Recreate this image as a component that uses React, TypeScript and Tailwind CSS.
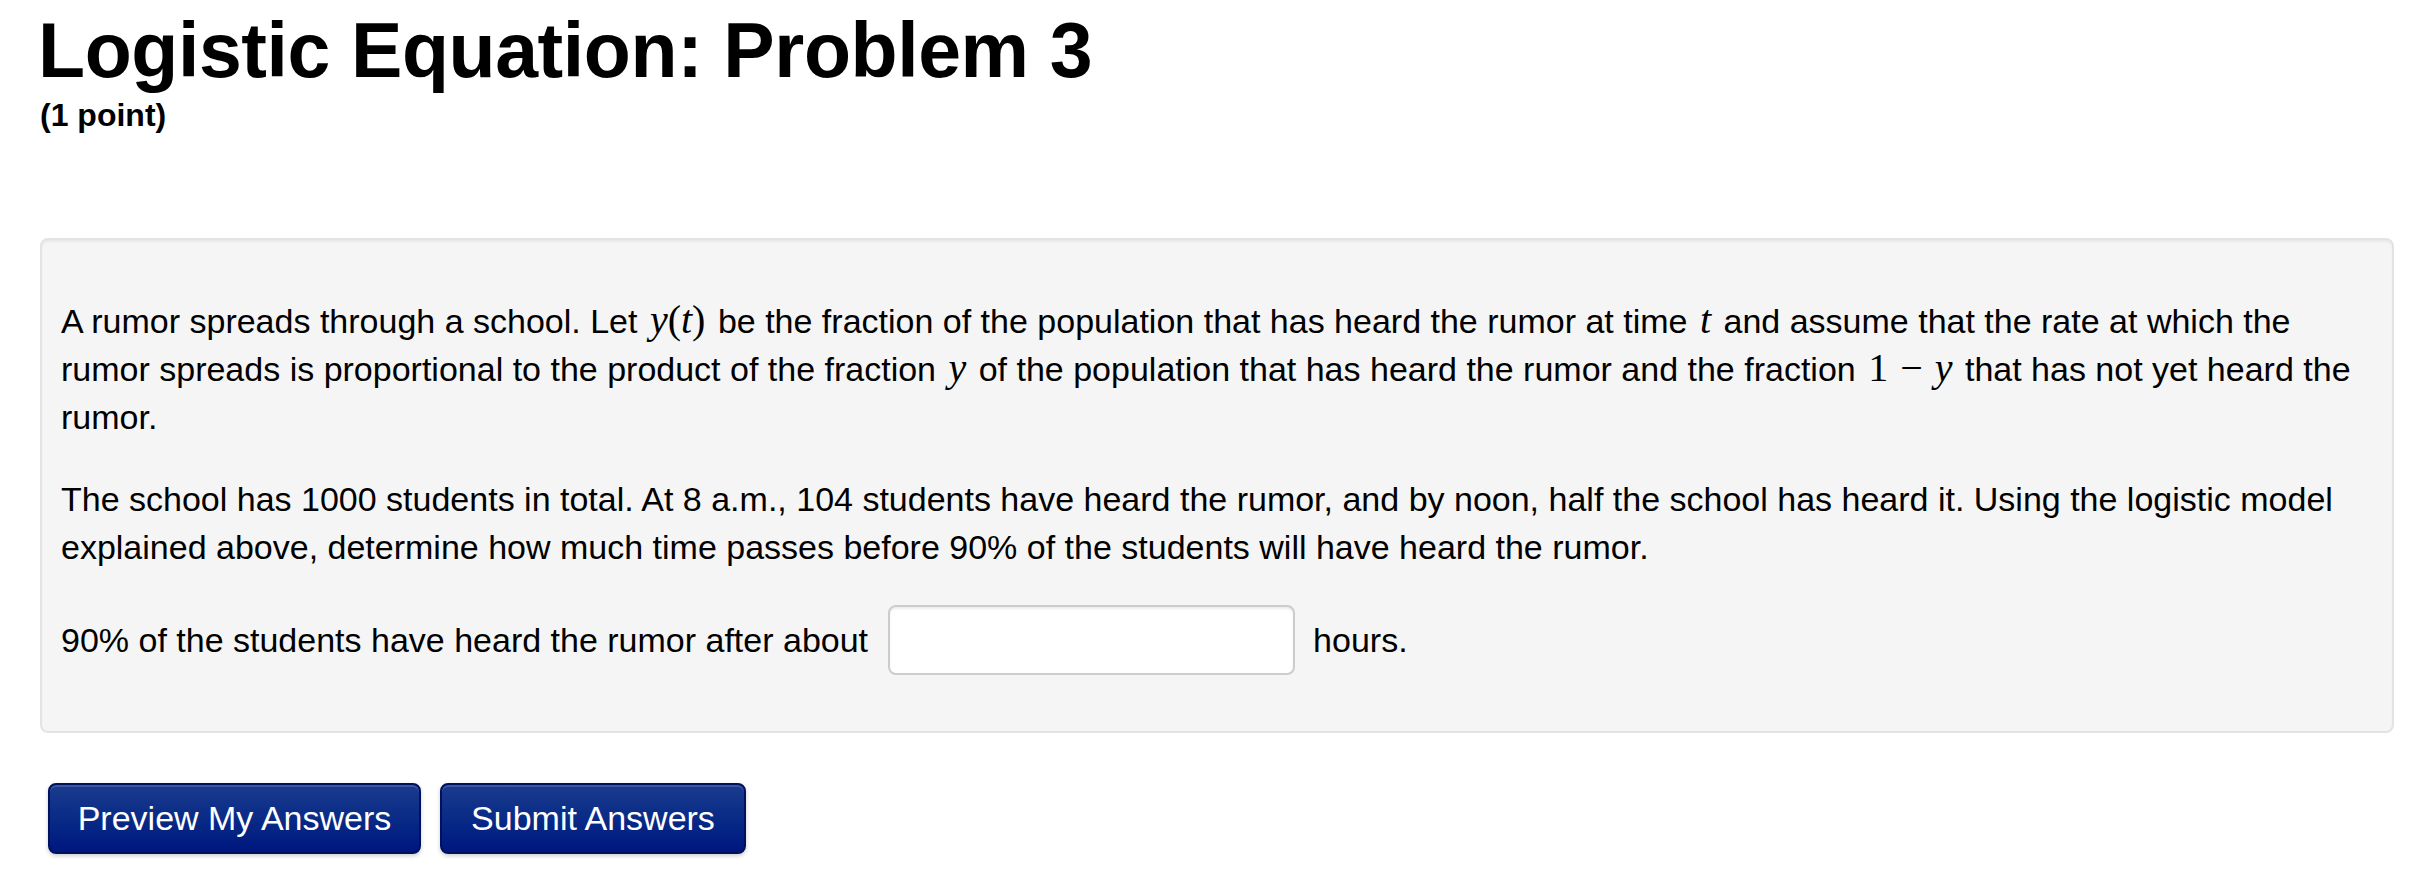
import React from "react";

function MI({ children }: { children: React.ReactNode }) {
  return <span className="font-['Liberation_Serif',serif] italic text-[40px] leading-[0px]">{children}</span>;
}
function MR({ children }: { children: React.ReactNode }) {
  return <span className="font-['Liberation_Serif',serif] text-[40px] leading-[0px]">{children}</span>;
}
function Math({ children }: { children: React.ReactNode }) {
  return <span className="inline px-[3px] leading-[0px]">{children}</span>;
}

export default function App() {
  return (
    <div className="min-h-[875px] bg-white text-black font-['Liberation_Sans',Arial,sans-serif] px-[40px] pt-[10px]">
      <h1 className="text-[77px] leading-[80px] font-bold tracking-[-0.4px] -ml-[2px]">Logistic Equation: Problem 3</h1>
      <div className="mt-[5px] text-[32px] leading-[40px] font-bold">(1 point)</div>

      <div className="mt-[103px] border-2 border-[#e3e3e3] rounded-[8px] bg-[#f5f5f5] shadow-[inset_0_2px_2px_rgba(0,0,0,0.05)] pt-[57px] pb-[56px] px-[19px]">
        <p className="text-[34px] leading-[48px] whitespace-nowrap">
          A rumor spreads through a school. Let <Math><MI>y</MI><MR>(</MR><MI>t</MI><MR>)</MR></Math> be the fraction of the population that has heard the rumor at time <Math><MI>t</MI></Math> and assume that the rate at which the
          <br />
          rumor spreads is proportional to the product of the fraction <Math><MI>y</MI></Math> of the population that has heard the rumor and the fraction <Math><MR>1</MR><span className="inline-block w-[12px]"></span><MR>{"\u2212"}</MR><span className="inline-block w-[12px]"></span><MI>y</MI></Math> that has not yet heard the
          <br />
          rumor.
        </p>
        <p className="mt-[34px] text-[34px] leading-[48px] whitespace-nowrap">
          The school has 1000 students in total. At 8 a.m., 104 students have heard the rumor, and by noon, half the school has heard it. Using the logistic model
          <br />
          explained above, determine how much time passes before 90% of the students will have heard the rumor.
        </p>
        <div className="mt-[34px] flex items-center h-[70px] text-[34px] leading-[48px] whitespace-nowrap">
          <span>90% of the students have heard the rumor after about</span>
          <input
            type="text"
            className="ml-[20px] mr-[18px] w-[407px] h-[70px] bg-white border-2 border-[#cccccc] rounded-[8px] shadow-[inset_0_2px_2px_rgba(0,0,0,0.075)] outline-none px-[12px] text-[33px]"
          />
          <span>hours.</span>
        </div>
      </div>

      <div className="mt-[50px] ml-[8px] flex gap-[19px]">
        <button className="w-[373px] h-[71px] rounded-[8px] border-2 border-[#00115e] bg-linear-to-b from-[#1a3b8d] to-[#00157f] text-white text-[34px] shadow-[inset_0_2px_0_rgba(255,255,255,0.15),0_2px_4px_rgba(0,0,0,0.2)]">
          Preview My Answers
        </button>
        <button className="w-[306px] h-[71px] rounded-[8px] border-2 border-[#00115e] bg-linear-to-b from-[#1a3b8d] to-[#00157f] text-white text-[34px] shadow-[inset_0_2px_0_rgba(255,255,255,0.15),0_2px_4px_rgba(0,0,0,0.2)]">
          Submit Answers
        </button>
      </div>
    </div>
  );
}
